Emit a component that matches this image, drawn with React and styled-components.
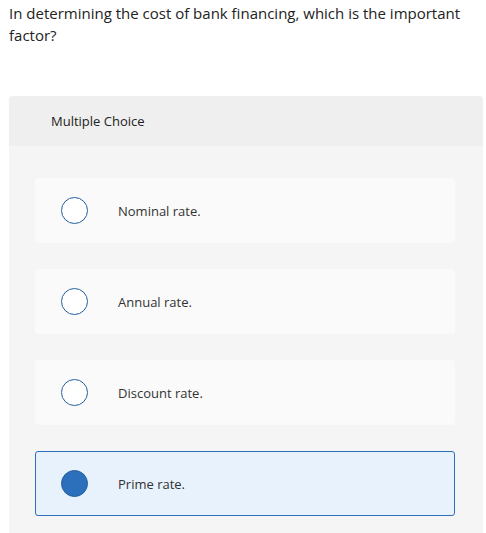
import React, { useState } from "react";
import styled, { createGlobalStyle } from "styled-components";

const GlobalStyle = createGlobalStyle`
  body {
    margin: 0;
    background: #ffffff;
    font-family: "Open Sans", "Lato", sans-serif;
    color: #333333;
  }
`;

const Page = styled.div`
  width: 486px;
  padding: 0 3px 0 9px;
  box-sizing: border-box;
`;

const Question = styled.p`
  margin: 0;
  padding-top: 2px;
  font-size: 15px;
  line-height: 22px;
  color: #222222;
  height: 96px;
  box-sizing: border-box;
`;

const Panel = styled.section`
  background: #f5f5f5;
  border-radius: 4px 4px 0 0;
  overflow: hidden;
`;

const PanelHeader = styled.div`
  height: 50px;
  background: #efefef;
  display: flex;
  align-items: center;
  padding-left: 42px;
  font-size: 13px;
  color: #222222;
`;

const Choices = styled.div`
  display: flex;
  flex-direction: column;
  gap: 26px;
  padding: 32px 28px 20px 26px;
`;

const Choice = styled.label`
  display: flex;
  align-items: center;
  height: 65px;
  box-sizing: border-box;
  padding-left: 25px;
  border-radius: 3px;
  cursor: pointer;
  background: ${p => (p.$selected ? "#e8f2fc" : "#fafafa")};
  border: 1px solid ${p => (p.$selected ? "#2e6fbd" : "#fafafa")};
`;

const Radio = styled.span`
  width: 27px;
  height: 27px;
  box-sizing: border-box;
  border-radius: 50%;
  border: 1.5px solid #245f9c;
  background: ${p => (p.$selected ? "#2c6fba" : "#ffffff")};
  flex-shrink: 0;
`;

const ChoiceText = styled.span`
  margin-left: 30px;
  font-size: 13px;
  color: #333333;
`;

const options = ["Nominal rate.", "Annual rate.", "Discount rate.", "Prime rate."];

export default function App() {
  const [selected, setSelected] = useState(3);
  return (
    <Page>
      <GlobalStyle />
      <Question>
        In determining the cost of bank financing, which is the important
        factor?
      </Question>
      <Panel>
        <PanelHeader>Multiple Choice</PanelHeader>
        <Choices>
          {options.map((opt, i) => (
            <Choice key={opt} $selected={selected === i} onClick={() => setSelected(i)}>
              <Radio $selected={selected === i} />
              <ChoiceText>{opt}</ChoiceText>
            </Choice>
          ))}
        </Choices>
      </Panel>
    </Page>
  );
}
